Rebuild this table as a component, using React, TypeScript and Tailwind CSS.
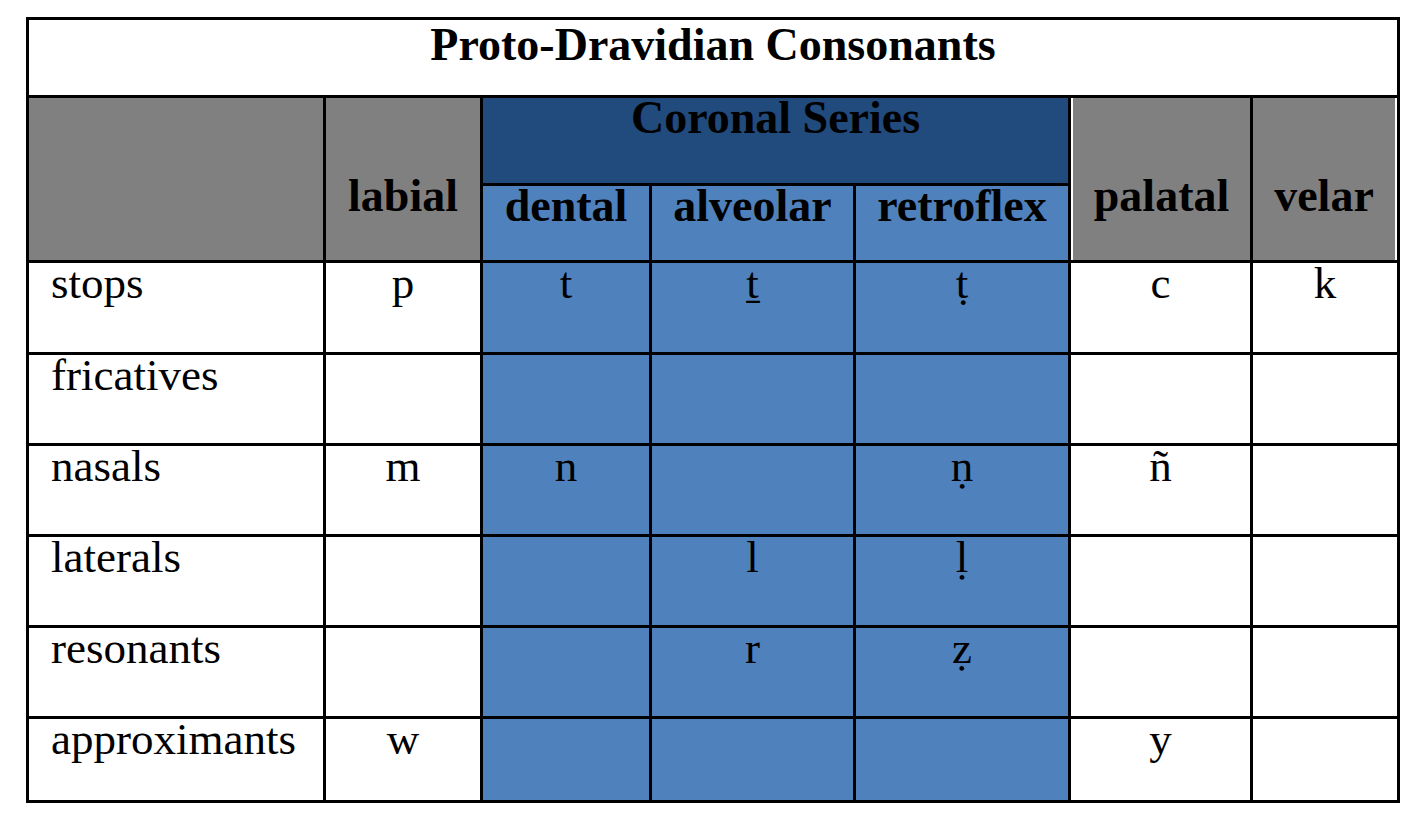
import React from "react";

const rows: string[][] = [
  ["stops", "p", "t", "ṯ", "ṭ", "c", "k"],
  ["fricatives", "", "", "", "", "", ""],
  ["nasals", "m", "n", "", "ṇ", "ñ", ""],
  ["laterals", "", "", "l", "ḷ", "", ""],
  ["resonants", "", "", "r", "ẓ", "", ""],
  ["approximants", "w", "", "", "", "y", ""],
];

function cellClass(ci: number): string {
  if (ci === 0) return "bg-white text-left pl-[22px]";
  if (ci >= 2 && ci <= 4) return "bg-[#4f81bd] text-center";
  return "bg-white text-center";
}

export default function App() {
  return (
    <div className="min-h-[819px] w-full bg-white pt-[17px] pl-[26px] font-['Liberation_Serif','DejaVu_Serif',serif] text-black">
      <div className="grid w-[1374px] grid-cols-[294px_154px_166px_201px_212px_179px_144px] grid-rows-[75px_85px_74px_89px_88px_88px_88px_88px_81px] gap-[3px] bg-black p-[3px]">
        <div className="col-span-7 bg-white text-center text-[46px] font-bold leading-[50px]">
          Proto-Dravidian Consonants
        </div>
        <div className="row-span-2 bg-[#808080]" />
        <div className="row-span-2 bg-[#808080] pt-[78px] text-center text-[46px] font-bold leading-[40px]">
          labial
        </div>
        <div className="col-span-3 bg-[#214a7d] text-center text-[46px] font-bold leading-[40px]">
          Coronal Series
        </div>
        <div className="row-span-2 border-l-2 border-white bg-[#808080] pt-[78px] text-center text-[46px] font-bold leading-[40px]">
          palatal
        </div>
        <div className="row-span-2 border-r-2 border-white bg-[#808080] pt-[78px] text-center text-[46px] font-bold leading-[40px]">
          velar
        </div>
        <div className="bg-[#4f81bd] text-center text-[46px] font-bold leading-[40px]">dental</div>
        <div className="bg-[#4f81bd] text-center text-[46px] font-bold leading-[40px]">alveolar</div>
        <div className="bg-[#4f81bd] text-center text-[46px] font-bold leading-[40px]">retroflex</div>
        {rows.map((r, ri) =>
          r.map((c, ci) => (
            <div key={`${ri}-${ci}`} className={`${cellClass(ci)} text-[45px] leading-[40px]`}>
              {c}
            </div>
          ))
        )}
      </div>
    </div>
  );
}
